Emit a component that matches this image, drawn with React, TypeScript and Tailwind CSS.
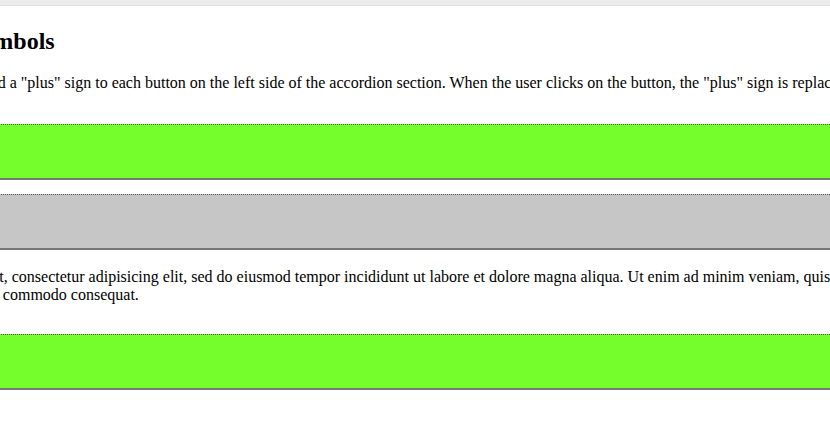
import React, { useState } from "react";

// Accordion sections shown on the page
interface Section {
  title: string;
  body: string;
}

const lorem =
  "Lorem ipsum dolor sit amet, consectetur adipisicing elit, sed do eiusmod tempor incididunt ut labore et dolore magna aliqua. Ut enim ad minim veniam, quis nostrud exercitation ullamco laboris nisi ut aliquip ex ea commodo consequat.";

const sections: Section[] = [
  { title: "Section 1", body: lorem },
  { title: "Section 2", body: lorem },
  { title: "Section 3", body: lorem },
];

const App: React.FC = () => {
  const [open, setOpen] = useState<number>(1);

  return (
    <div
      className="w-[830px] h-[436px] overflow-hidden bg-white text-black"
      style={{ fontFamily: '"Liberation Serif", "Times New Roman", serif' }}
    >
      {/* Browser frame strip */}
      <div className="h-[6px] bg-[#ebebeb] border-b border-b-[#e2e2e2]" />

      {/* Page body, scrolled sideways */}
      <div className="-ml-[192px] w-[1248px]">
        <h2 className="mt-[21px] text-[24px] leading-[28px] font-bold">Accordion with symbols</h2>
        <p className="mt-[19px] text-[16px] leading-[18px]">
          In this example we have added a "plus" sign to each button on the left side of the accordion section. When
          the user clicks on the button, the "plus" sign is replaced with a "minus" sign.
        </p>

        <div className="mt-[32px] flex flex-col gap-[14px]">
          {sections.map((s, i) => {
            const active = open === i;
            return (
              <div key={s.title}>
                <button
                  className={`flex w-full items-center justify-between px-[18px] py-[18px] text-left text-[15px] leading-[17px] text-[#444] border-t border-t-[#555] [border-top-style:dotted] border-b-2 border-b-[#777] [border-bottom-style:solid] cursor-pointer ${
                    active ? "bg-[#c6c6c6]" : "bg-[#75fe2c]"
                  }`}
                  onClick={() => setOpen(active ? -1 : i)}
                >
                  <span>{s.title}</span>
                  <span className="ml-[5px] text-[13px] text-[#777]">{active ? "−" : "+"}</span>
                </button>
                {active && (
                  <div className="overflow-hidden px-[18px] bg-white">
                    <p className="mt-[18px] mb-4 text-[16px] leading-[18px]">{s.body}</p>
                  </div>
                )}
              </div>
            );
          })}
        </div>
      </div>
    </div>
  );
};

export default App;
